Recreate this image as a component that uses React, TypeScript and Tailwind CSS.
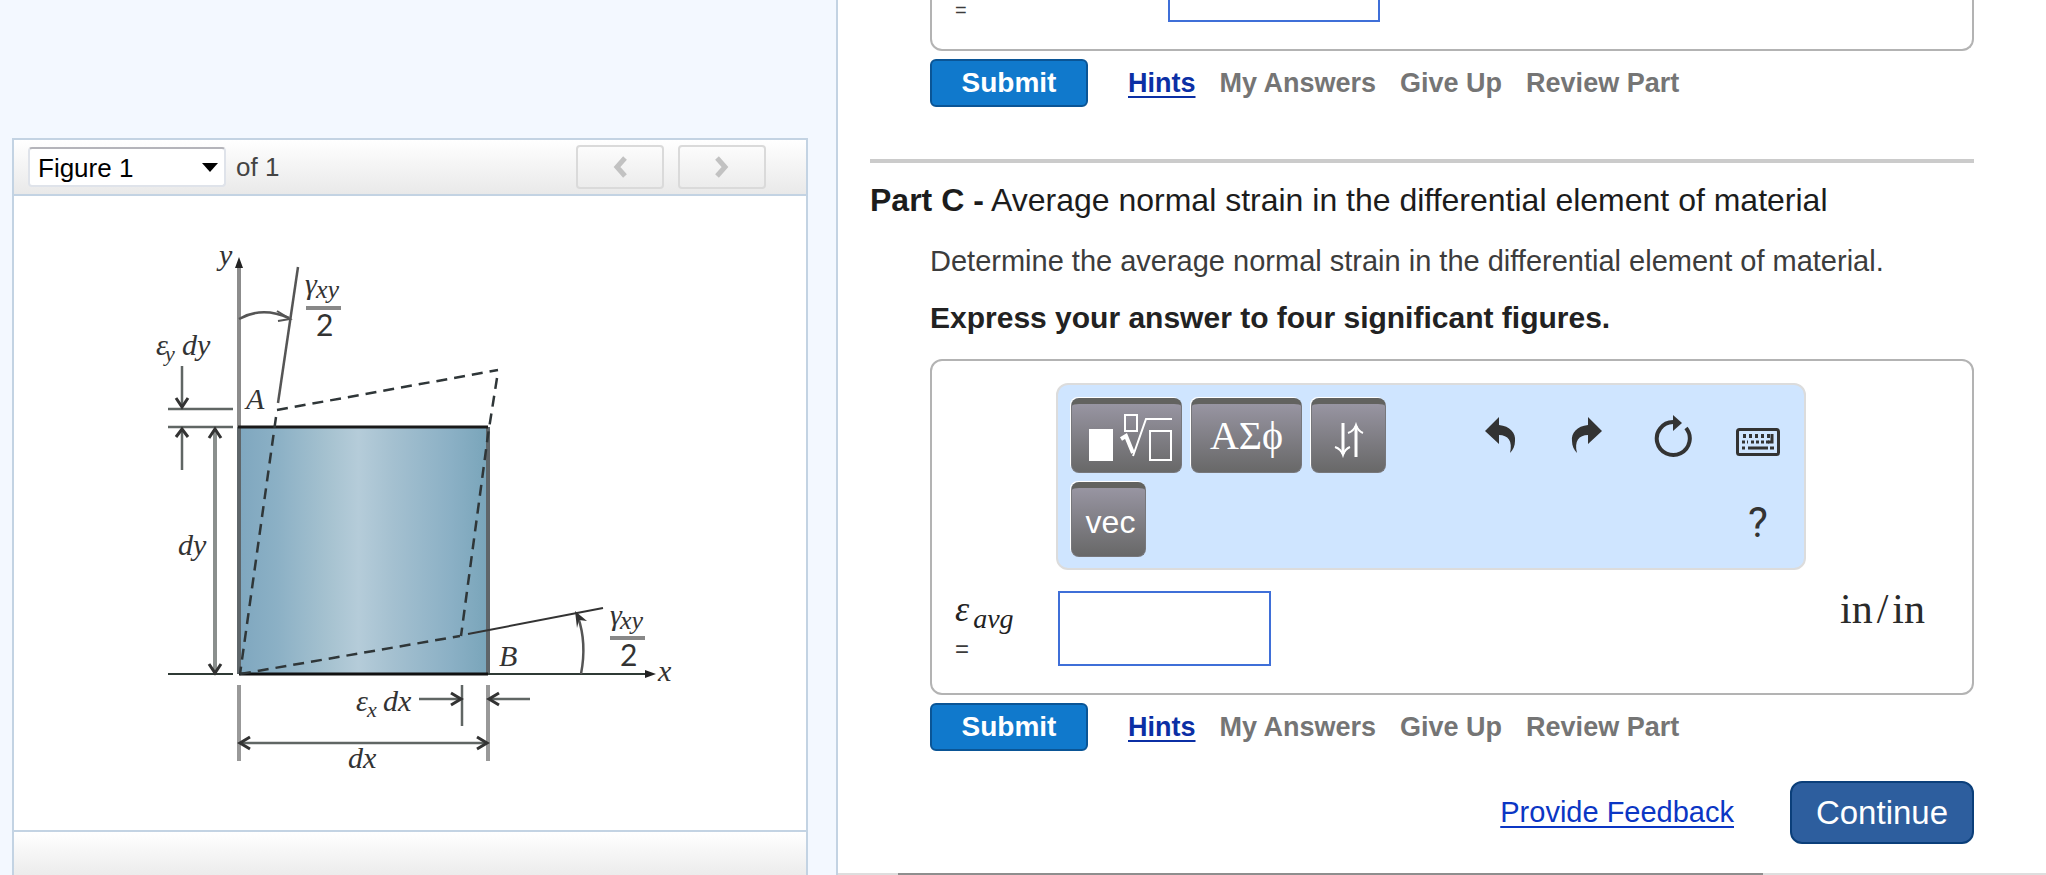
import React, { useState } from 'react';

const navButton =
  'flex h-11 w-[88px] items-center justify-center rounded border-2 border-[#dadada] bg-linear-to-b from-[#fcfcfc] to-[#ececec] text-[#c2c2c2]';

const mathButton =
  'flex h-[75px] items-center justify-center rounded-lg border border-t-[6px] border-[#77777b] border-t-[#62625f] bg-linear-to-b from-[#9895a2] to-[#686868] text-white shadow-[-1px_-1px_0_#ffffff]';

const ElementFigure: React.FC = () => (
  <svg
    viewBox="140 230 560 560"
    className="h-[560px] w-[560px]"
    role="img"
    aria-label="Strained differential element"
    fontFamily="Liberation Serif, serif"
    fontStyle="italic"
    fontSize="30"
    fill="#333"
  >
    <defs>
      <linearGradient id="steel">
        <stop offset="0" stopColor="#7fa7bf" />
        <stop offset="0.15" stopColor="#8bb0c5" />
        <stop offset="0.36" stopColor="#a6c2d0" />
        <stop offset="0.48" stopColor="#b5ccd9" />
        <stop offset="0.62" stopColor="#a4c0d0" />
        <stop offset="0.85" stopColor="#8bb0c5" />
        <stop offset="1" stopColor="#79a5ba" />
      </linearGradient>
    </defs>

    <rect x="239" y="427" width="249" height="247" fill="url(#steel)" />

    {/* Axes and element outline */}
    <g fill="none">
      <path d="M239 266V427" stroke="#8c8c8c" strokeWidth="4" />
      <path d="M239 427V674M488 427V674" stroke="#5f666a" strokeWidth="4" />
      <path d="M238 427H488" stroke="#1a1a1a" strokeWidth="3" />
      <path d="M239 674H488" stroke="#111" strokeWidth="3" />
      <path d="M168 674H233M488 674H646" stroke="#2f3a35" strokeWidth="2" />
    </g>
    <path d="M239 257L243 268H235ZM656 674L645 670V678Z" fill="#222" />

    {/* Deformed shape */}
    <g fill="none" stroke="#2f3638" strokeWidth="2.5" strokeDasharray="11 7">
      <path d="M277 410L498 370" />
      <path d="M497 378L488 435L461 636" />
      <path d="M276 417L240 674" />
      <path d="M240 674L460 636" />
    </g>
    <g fill="none" stroke="#555" strokeWidth="2.5">
      <path d="M298 267L278 403" />
      <path d="M468 634L603 608" strokeWidth="2" stroke="#333" />
      <path d="M239 319Q262 306 289 318" />
      <path d="M277 311L290 319L278 321" strokeWidth="2" />
      <path d="M581 674Q587 643 578 617" />
    </g>
    <path d="M575 611L587 621L579 620L577 628Z" fill="#333" />

    {/* Dimension lines */}
    <g fill="none" stroke="#606664" strokeWidth="2.5">
      <path d="M168 409H233M168 427H233" />
      <path d="M182 366V407M182 470V429" />
      <path d="M215 430V671" stroke="#8a8f8d" strokeWidth="4" />
      <path d="M239 685V761M488 685V761" stroke="#999" strokeWidth="4" />
      <path d="M462 685V726" />
      <path d="M419 699H461M530 699H490M241 743H486" />
    </g>
    <g fill="none" stroke="#333" strokeWidth="3">
      <path d="M176 398L182 407L188 398M176 437L182 429L188 437" />
      <path d="M209 438L215 429L221 438M209 664L215 673L221 664" />
      <path d="M451 693L461 699L451 705M499 693L489 699L499 705" />
      <path d="M250 737L240 743L250 749M477 737L487 743L477 749" />
    </g>

    <text x="219" y="265">y</text>
    <text x="156" y="355">ε</text>
    <text x="165" y="361" fontSize="22">y</text>
    <text x="182" y="355">dy</text>
    <text x="246" y="409">A</text>
    <text x="178" y="555">dy</text>
    <text x="499" y="666">B</text>
    <text x="658" y="681">x</text>
    <text x="356" y="711">ε</text>
    <text x="367" y="717" fontSize="22">x</text>
    <text x="383" y="711">dx</text>
    <text x="348" y="768">dx</text>

    <text x="305" y="294">γ</text>
    <text x="316" y="298" fontSize="26">xy</text>
    <path d="M306 308H341" stroke="#888" strokeWidth="4" />
    <text x="316" y="336" fontFamily="Lato, sans-serif" fontStyle="normal">2</text>

    <text x="610" y="625">γ</text>
    <text x="620" y="629" fontSize="26">xy</text>
    <path d="M610 638H645" stroke="#888" strokeWidth="4" />
    <text x="620" y="666" fontFamily="Lato, sans-serif" fontStyle="normal">2</text>
  </svg>
);

const FigurePanel: React.FC = () => {
  const [figure, setFigure] = useState('1');

  return (
    <aside className="flex w-[838px] shrink-0 flex-col border-r-2 border-[#c3d3e3] bg-[#f3f8ff] pt-[138px] pr-7 pl-3">
      <div className="flex flex-1 flex-col border-2 border-b-0 border-[#c3d3e3] bg-white">
        <div className="flex h-14 items-center justify-between border-b-2 border-[#c3d3e3] bg-linear-to-b from-white to-[#e9e9e9] pr-10 pl-[14px]">
          <div className="flex items-center gap-[10px] text-[26px] text-[#444]">
            <div className="relative">
              <select
                aria-label="Figure"
                value={figure}
                onChange={(e) => setFigure(e.target.value)}
                className="h-10 w-[198px] appearance-none rounded border-2 border-[#dfe3ea] border-t-[#b4b4ba] bg-white pl-2 text-black"
              >
                <option value="1">Figure 1</option>
              </select>
              <svg viewBox="0 0 16 9" className="pointer-events-none absolute top-4 right-2 h-[9px] w-4">
                <path d="M0 0H16L8 9Z" fill="#000" />
              </svg>
            </div>
            <span>of 1</span>
          </div>
          <div className="flex gap-[14px]">
            <button aria-label="Previous figure" className={navButton}>
              <svg viewBox="0 0 14 22" className="h-[22px] w-[14px]" fill="none" stroke="currentColor" strokeWidth="5">
                <path d="M12 2L4 11L12 20" />
              </svg>
            </button>
            <button aria-label="Next figure" className={navButton}>
              <svg viewBox="0 0 14 22" className="h-[22px] w-[14px]" fill="none" stroke="currentColor" strokeWidth="5">
                <path d="M2 2L10 11L2 20" />
              </svg>
            </button>
          </div>
        </div>
        <div className="flex items-center pt-[34px] pb-10 pl-[126px]">
          <ElementFigure />
        </div>
        <div className="min-h-11 flex-1 border-t-2 border-[#c3d3e3] bg-linear-to-b from-white to-[#ececec]" />
      </div>
    </aside>
  );
};

const SubmitRow: React.FC = () => (
  <div className="mt-2 flex h-12 items-center text-[27px] font-bold">
    <button className="h-12 w-[158px] rounded-md border-2 border-[#0a5596] bg-[#1079cc] text-[28px] text-white">
      Submit
    </button>
    <nav className="ml-10 flex gap-6 text-[#757575]">
      <a href="#hints" className="text-[#0b2fa5] underline underline-offset-4">Hints</a>
      <a href="#answers">My Answers</a>
      <a href="#give-up">Give Up</a>
      <a href="#review">Review Part</a>
    </nav>
  </div>
);

const MathToolbar: React.FC = () => (
  <div className="ml-[124px] flex w-[750px] justify-between rounded-xl border-2 border-[#dcdcdc] bg-[#cfe5ff] pt-[13px] pr-6 pb-[11px] pl-[13px]">
    <div className="flex flex-col gap-[9px]">
      <div className="flex gap-[9px]">
        <button aria-label="Templates" className={`${mathButton} w-[111px]`}>
          <svg viewBox="0 0 90 50" className="h-[50px] w-[90px]" fill="none" stroke="#fff" strokeWidth="2">
            <rect x="8" y="17" width="22" height="30" fill="#fff" />
            <rect x="43" y="2" width="12" height="16" />
            <path d="M39 26L44 23L51 40" strokeWidth="4" />
            <path d="M51 43L64 6H90" />
            <rect x="68" y="18" width="21" height="29" />
          </svg>
        </button>
        <button aria-label="Symbols" className={`${mathButton} w-[111px] pb-1 font-[Liberation_Serif,DejaVu_Serif,serif] text-[40px]`}>
          ΑΣϕ
        </button>
        <button aria-label="Arrows" className={`${mathButton} w-[75px]`}>
          <svg viewBox="0 0 30 36" className="mt-1 h-9 w-[30px]" fill="none" stroke="#fff" strokeWidth="3">
            <path d="M9 1V32M22 35V4" />
            <path d="M1 25Q7 27 9 33Q11 27 16 25M14 11Q20 9 22 3Q24 9 29 11" strokeWidth="2" />
          </svg>
        </button>
      </div>
      <button className={`${mathButton} w-[75px] pl-1 text-[32px]`}>vec</button>
    </div>
    <div className="flex flex-col items-end justify-between text-[#333]">
      <div className="flex h-[76px] items-center gap-[52px]">
        <button aria-label="Undo">
          <svg viewBox="0 0 31 40" className="h-10 w-[31px]" fill="currentColor">
            <path d="M0 15L14 1V9C25 10 31 17 30 25C30 30 28 34 25 37C28 25 23 19 14 19V28Z" />
          </svg>
        </button>
        <button aria-label="Redo">
          <svg viewBox="0 0 34 40" className="h-10 w-[34px]" fill="currentColor">
            <path d="M34 15L20 1V9C9 10 3 17 4 25C4 30 6 34 9 37C6 25 11 19 20 19V28Z" />
          </svg>
        </button>
        <button aria-label="Reset">
          <svg viewBox="0 0 38 44" className="h-11 w-[38px]">
            <path d="M32 14A16.5 16.5 0 1 1 19 8" fill="none" stroke="currentColor" strokeWidth="4" />
            <path d="M19 1L28 9L19 17Z" fill="currentColor" />
          </svg>
        </button>
        <button aria-label="Keyboard shortcuts" className="-ml-2 pt-3">
          <svg viewBox="0 0 44 28" className="h-7 w-11" fill="none" stroke="currentColor">
            <rect x="1.5" y="1.5" width="41" height="25" rx="2" strokeWidth="3" />
            <path d="M7 8H34" strokeWidth="4" strokeDasharray="3 3" />
            <path d="M6 14H12M15 14H33" strokeWidth="3" strokeDasharray="3 2" />
            <path d="M36 6V14H32" strokeWidth="3" />
            <path d="M6 20H9M12 20H32M34 20H38" strokeWidth="3" />
          </svg>
        </button>
      </div>
      <button className="w-11 text-[42px] leading-[68px] font-[Roboto,sans-serif]">?</button>
    </div>
  </div>
);

const App: React.FC = () => {
  const [answer, setAnswer] = useState('');
  const [previous, setPrevious] = useState('');

  return (
    <div className="flex min-h-screen bg-white font-[Liberation_Sans,Arial,sans-serif] text-[29px] text-[#3c3c3c]">
      <FigurePanel />

      <main className="flex min-w-0 flex-1 flex-col justify-between">
        <div className="pr-[72px] pl-8">
          <div className="ml-[60px]">
            <div className="flex h-[51px] items-start rounded-b-xl border-2 border-t-0 border-[#b3b3b3] pl-[23px]">
              <label htmlFor="part-b" className="w-[213px] text-[20px] leading-5">=</label>
              <input
                id="part-b"
                value={previous}
                onChange={(e) => setPrevious(e.target.value)}
                className="h-[22px] w-[212px] border-2 border-t-0 border-[#3f6fd8] px-2 text-base outline-none"
              />
            </div>
            <SubmitRow />
          </div>

          <hr className="mt-[52px] border-t-4 border-[#cbcbcb]" />

          <h2 className="mt-[17px] text-[32px] leading-10 text-[#1c1c1c]">
            <b>Part C -</b> Average normal strain in the differential element of material
          </h2>

          <div className="ml-[60px]">
            <p className="mt-[21px] leading-10">
              Determine the average normal strain in the differential element of material.
            </p>
            <p className="mt-[17px] text-[30px] leading-10 font-bold text-[#222]">
              Express your answer to four significant figures.
            </p>

            <div className="mt-[21px] rounded-xl border-2 border-[#b3b3b3] py-[22px]">
              <MathToolbar />
              <div className="mt-[21px] flex items-start pl-[23px]">
                <label htmlFor="part-c" className="w-[103px] leading-9">
                  <span className="block font-[Liberation_Serif,serif] text-[36px] leading-9 text-[#222] italic">
                    ε<sub className="ml-1 text-[28px]">avg</sub>
                  </span>
                  <span className="block text-[24px] leading-[44px]">=</span>
                </label>
                <input
                  id="part-c"
                  value={answer}
                  onChange={(e) => setAnswer(e.target.value)}
                  className="h-[75px] w-[213px] border-2 border-[#3f6fd8] bg-white px-3 outline-none"
                />
                <span className="mr-[47px] ml-auto flex gap-1 font-[Liberation_Serif,serif] text-[42px] leading-9 text-[#2a2a2a]">
                  <span>in</span>
                  <span>/</span>
                  <span>in</span>
                </span>
              </div>
            </div>
            <SubmitRow />
          </div>

          <div className="mt-[30px] mb-7 flex items-center justify-end gap-14">
            <a href="#feedback" className="text-[29px] text-[#0b36c4] underline underline-offset-4">
              Provide Feedback
            </a>
            <button className="h-[63px] w-[184px] rounded-xl border-2 border-[#0b3f7a] bg-[#2d5e9e] text-[33px] text-white">
              Continue
            </button>
          </div>
        </div>

        <div className="h-[2px] bg-[#dedede] pr-[283px] pl-[60px]">
          <div className="h-full bg-[#8e8e8e]" />
        </div>
      </main>
    </div>
  );
};

export default App;
